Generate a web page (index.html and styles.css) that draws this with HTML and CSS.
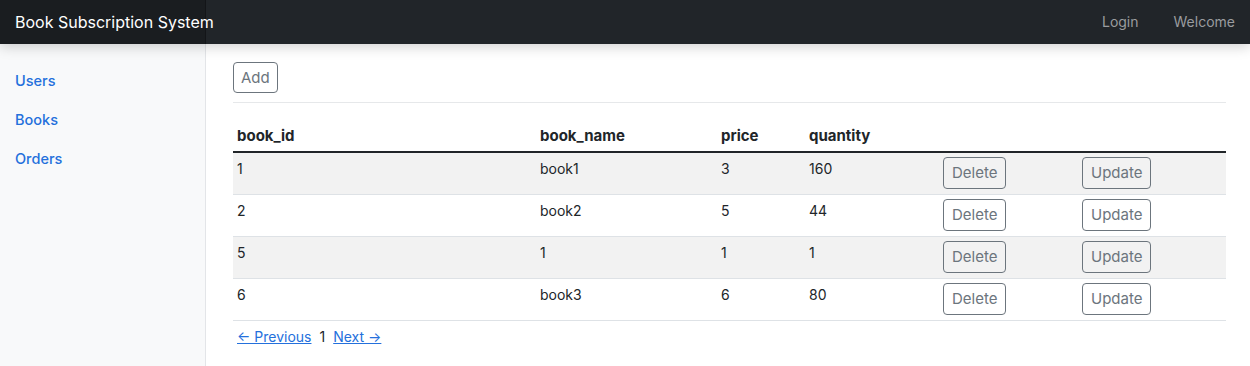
FILE: index.html
```
<!DOCTYPE html>
<html lang="en">
<head>
<meta charset="utf-8">
<title>Book Subscription System</title>
<link rel="stylesheet" href="styles.css">
</head>
<body>
<header class="navbar">
  <a class="brand" href="#">Book Subscription System</a>
  <nav class="top-links">
    <a href="#">Login</a>
    <a href="#">Welcome</a>
  </nav>
</header>
<div class="layout">
  <aside class="sidebar">
    <ul class="side-nav">
      <li><a href="#">Users</a></li>
      <li><a href="#">Books</a></li>
      <li><a href="#">Orders</a></li>
    </ul>
  </aside>
  <main class="main">
    <div class="toolbar">
      <button class="btn">Add</button>
    </div>
    <table class="table">
      <colgroup>
        <col class="c1"><col class="c2"><col class="c3"><col class="c4"><col class="c5"><col class="c6">
      </colgroup>
      <thead>
        <tr><th>book_id</th><th>book_name</th><th>price</th><th>quantity</th><th></th><th></th></tr>
      </thead>
      <tbody>
        <tr><td>1</td><td>book1</td><td>3</td><td>160</td><td><button class="btn">Delete</button></td><td><button class="btn">Update</button></td></tr>
        <tr><td>2</td><td>book2</td><td>5</td><td>44</td><td><button class="btn">Delete</button></td><td><button class="btn">Update</button></td></tr>
        <tr><td>5</td><td>1</td><td>1</td><td>1</td><td><button class="btn">Delete</button></td><td><button class="btn">Update</button></td></tr>
        <tr><td>6</td><td>book3</td><td>6</td><td>80</td><td><button class="btn">Delete</button></td><td><button class="btn">Update</button></td></tr>
      </tbody>
    </table>
    <div class="pager">
      <a href="#">&larr; Previous</a>
      <span>1</span>
      <a href="#">Next &rarr;</a>
    </div>
  </main>
</div>
</body>
</html>
```
FILE: styles.css
```
* { box-sizing: border-box; }
html, body { margin: 0; padding: 0; }
body {
  font-family: Inter, "Liberation Sans", sans-serif;
  font-size: 14px;
  line-height: 24px;
  color: #212529;
  background: #fff;
  height: 366px;
  overflow: hidden;
}
.navbar {
  position: relative;
  z-index: 2;
  display: flex;
  align-items: stretch;
  height: 44px;
  background: #212529;
  box-shadow: 0 3px 12px rgba(0,0,0,.18);
}
.brand {
  width: 206px;
  display: flex;
  align-items: center;
  padding-left: 15px;
  background: #1a1d20;
  color: #fff;
  text-decoration: none;
  font-size: 16px;
  white-space: nowrap;
  box-shadow: inset -1px 0 0 rgba(0,0,0,.25);
}
.top-links {
  margin-left: auto;
  display: flex;
  align-items: center;
  gap: 35px;
  padding-right: 15px;
}
.top-links a {
  color: #9a9c9f;
  text-decoration: none;
  font-size: 14px;
}
.layout {
  display: flex;
  height: 322px;
}
.sidebar {
  width: 206px;
  flex: none;
  background: #f8f9fa;
  box-shadow: inset -1px 0 0 #e3e5e8;
  padding-top: 18px;
}
.side-nav {
  list-style: none;
  margin: 0;
  padding: 0;
}
.side-nav li a {
  display: block;
  padding: 7px 15px 8px;
  color: #2470dc;
  font-weight: 500;
  font-size: 14.5px;
  text-decoration: none;
}
.main {
  flex: 1;
  padding: 18px 24px 0 27px;
}
.toolbar {
  padding-bottom: 9px;
  border-bottom: 1px solid #e6e8ea;
  margin-bottom: 17px;
}
.btn {
  font-family: inherit;
  font-size: 15px;
  line-height: 20px;
  color: #6c757d;
  background: transparent;
  border: 1px solid #6c757d;
  border-radius: 4px;
  padding: 5px 8px;
  cursor: pointer;
}
.toolbar .btn { height: 31px; padding: 4px 7px; }
.table {
  width: 100%;
  border-collapse: collapse;
}
.c1 { width: 303px; }
.c2 { width: 181px; }
.c3 { width: 88px; }
.c4 { width: 134px; }
.c5 { width: 139px; }
.c6 { width: auto; }
.table th, .table td {
  text-align: left;
  vertical-align: top;
  padding: 4px 4px;
  border-bottom: 1px solid #dee2e6;
}
.table th {
  font-weight: 700;
  font-size: 15px;
  padding-bottom: 3px;
  border-bottom: 2px solid #212529;
}
.table td .btn { display: block; height: 32px; }
.table tbody tr:nth-child(odd) td { background: #f2f2f2; }
.table tbody td { height: 42px; }
.pager {
  padding: 4px 4px;
  display: flex;
  gap: 8px;
}
.pager a {
  color: #2470dc;
  text-decoration: underline;
}
```
